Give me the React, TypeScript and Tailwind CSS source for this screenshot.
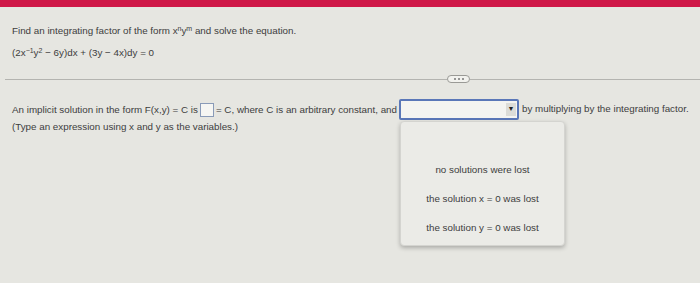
import { useState } from 'react';

const options = ['no solutions were lost', 'the solution x = 0 was lost', 'the solution y = 0 was lost'];

export default function App() {
  const [open] = useState(true);

  return (
    <div className="w-[700px] h-[283px] bg-[#e6e6e1] flex flex-col text-[#3d3d3d] font-['Liberation_Sans',Arial,sans-serif] text-[9.8px] overflow-hidden whitespace-nowrap">
      {/* top bar */}
      <div className="h-[7px] bg-[#cf1848] shrink-0" />

      <div className="px-[12px] pt-[18px]">
        <p className="leading-[12px]">
          Find an integrating factor of the form x<sup className="text-[7px]">n</sup>y<sup className="text-[7px]">m</sup> and solve the equation.
        </p>
        <p className="mt-[10px] leading-[12px]">
          (2x<sup className="text-[7px]">−1</sup>y<sup className="text-[7px]">2</sup> − 6y)dx + (3y − 4x)dy = 0
        </p>
      </div>

      {/* divider with collapse pill */}
      <div className="mt-[16px] ml-[5px] flex items-center">
        <div className="h-px w-[442px] bg-[#b4b4b0]" />
        <div className="w-[23px] h-[8px] rounded-full border border-[#9a9a96] bg-[#f2f2ee] flex items-center justify-center gap-[2px]">
          <span className="w-[2px] h-[2px] bg-[#777] rounded-full" />
          <span className="w-[2px] h-[2px] bg-[#777] rounded-full" />
          <span className="w-[2px] h-[2px] bg-[#777] rounded-full" />
        </div>
        <div className="h-px flex-1 bg-[#b4b4b0]" />
      </div>

      <div className="px-[12px] pt-[20px] flex items-start">
        <div className="flex flex-col shrink-0">
          <div className="flex items-center h-[14px]">
            <span>An implicit solution in the form F(x,y) = C is</span>
            <span className="mx-[2px] w-[14px] h-[14px] border border-[#8a9bb8] bg-[#f6f6f3]" />
            <span>= C, where C is an arbitrary constant, and</span>
          </div>
          <p className="mt-[4px] leading-[12px]">(Type an expression using x and y as the variables.)</p>
        </div>

        <div className="relative ml-[2px] -mt-[4px] shrink-0">
          <div className="w-[120px] h-[21px] border-2 border-[#5a77b8] rounded-[2px] bg-[#f4f4f1] flex items-center justify-end pr-[1px]">
            <div className="w-[10px] h-[13px] bg-[#dcdcd8] flex items-center justify-center text-[7px] text-[#222]">▼</div>
          </div>
          {open && (
            <div className="absolute left-[1px] top-[22px] w-[165px] h-[125px] bg-[#ebebe7] rounded-[4px] border border-[#d4d4d0] shadow-[0_2px_4px_rgba(0,0,0,0.25)] flex flex-col items-center pt-[42px] gap-[17px]">
              {options.map((o) => (
                <span key={o} className="leading-[12px]">{o}</span>
              ))}
            </div>
          )}
        </div>

        <span className="ml-[3px] leading-[12px] shrink-0">by multiplying by the integrating factor.</span>
      </div>
    </div>
  );
}
